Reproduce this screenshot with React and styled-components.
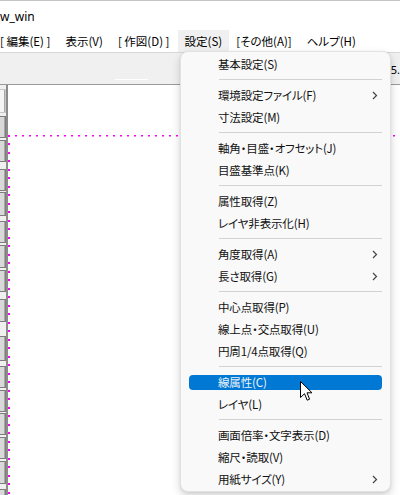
import React from 'react';
import styled, { createGlobalStyle } from 'styled-components';

const Global = createGlobalStyle`
  html, body { margin: 0; padding: 0; background: #fff; }
  #root { width: 400px; height: 495px; }
`;

const Screen = styled.div`
  position: relative;
  width: 400px;
  height: 495px;
  overflow: hidden;
  background: #fff;
  display: flex;
  flex-direction: column;
  font-family: "Noto Sans CJK JP", "Noto Sans", sans-serif;
  font-feature-settings: "palt";
  color: #000;
`;

const TitleBar = styled.div`
  height: 28px;
  border-top: 1px solid #c4c4c4;
  display: flex;
  align-items: center;
  font-family: "Noto Sans", "Liberation Sans", sans-serif;
  font-size: 12px;
  padding-top: 1px;
`;

const MenuBar = styled.div`
  height: 22px;
  display: flex;
  align-items: stretch;
  margin-left: -7px;
  font-size: 11.5px;
`;

const MenuBarItem = styled.div`
  display: flex;
  align-items: center;
  padding: 0 7px;
  white-space: pre;
  background: ${p => (p.$open ? '#f0f0f0' : 'transparent')};
  margin-right: ${p => (p.$gap ?? 1)}px;
`;

const Toolbar = styled.div`
  height: 31px;
  background: #f0f0f0;
  border-top: 1px solid #d8d8d8;
  border-bottom: 1px solid #9a9a9a;
  display: flex;
  align-items: flex-end;
  padding-left: 115px;
`;

const WhiteTick = styled.div`
  width: 33px;
  height: 1px;
  background: #fff;
  margin-bottom: 4px;
`;

const Spacer = styled.div`
  flex: 1;
`;

const ToolLabel = styled.div`
  align-self: center;
  font-family: "Noto Sans", "Liberation Sans", sans-serif;
  font-size: 11px;
  margin-right: 0;
  margin-top: 2px;
`;

const Main = styled.div`
  flex: 1;
  display: flex;
  min-height: 0;
`;

const LeftColumn = styled.div`
  width: 6px;
  background: #f0f0f0;
  display: flex;
  flex-direction: column;
  padding-top: 4px;
`;

const ToolButton = styled.div`
  flex: none;
  height: ${p => p.$h}px;
  margin-top: ${p => p.$gap}px;
  background: ${p => (p.$light ? '#f6f6f6' : '#d9d9d9')};
  border: 1px solid ${p => (p.$light ? '#c8c8c8' : '#7d7d7d')};
  border-left: none;
  box-shadow: inset -1px 0 0 #a8a8a8;
`;

const Canvas = styled.div`
  flex: 1;
  border-left: 2px solid #8c8c8c;
  background: #fff;
  display: flex;
  flex-direction: column;
`;

const Frame = styled.div`
  margin-top: 50px;
  flex: 1;
  background:
    repeating-linear-gradient(to right, #f0f 0 2px, transparent 2px 7px) top left / 100% 1.5px no-repeat,
    repeating-linear-gradient(to bottom, #f0f 0 2px, transparent 2px 8.5px) top left / 2px 100% no-repeat;
`;

const Dropdown = styled.div`
  position: absolute;
  left: 180px;
  top: 51px;
  width: 209px;
  padding: 1px 0;
  background: #f9f9f9;
  border: 1px solid #e2e2e2;
  border-radius: 8px;
  box-shadow: 0 4px 10px rgba(0, 0, 0, 0.16), 0 1px 3px rgba(0, 0, 0, 0.08);
  font-size: 11.5px;
`;

const Item = styled.div`
  height: 22px;
  display: flex;
  align-items: center;
`;

const ItemRow = styled.div`
  flex: 1;
  height: 15px;
  margin: 0 8px;
  padding: 0 4px 0 29px;
  border-radius: 4px;
  display: flex;
  align-items: center;
  justify-content: space-between;
  background: ${p => (p.$active ? '#0078d4' : 'transparent')};
  color: ${p => (p.$active ? '#eef3f9' : '#111')};
  letter-spacing: -0.15px;
  white-space: pre;
`;

const Separator = styled.div`
  height: 9px;
  display: flex;
  align-items: center;
  padding: 0 8px 0 38px;
  &::after {
    content: '';
    flex: 1;
    height: 1px;
    background: #d2d2d2;
  }
`;

const Chevron = () => (
  <svg width="6" height="9" viewBox="0 0 6 9">
    <path d="M1 1 L4.5 4.5 L1 8" fill="none" stroke="#444" strokeWidth="1.2" />
  </svg>
);

const Cursor = styled.svg`
  position: absolute;
  left: 300px;
  top: 381px;
`;

const menuBar = [
  { t: '[ 編集(E) ]' },
  { t: '表示(V)' },
  { t: '[ 作図(D) ]' },
  { t: '設定(S)', open: true, gap: 0 },
  { t: '[その他(A)]' },
  { t: 'ヘルプ(H)' },
];

const menu = [
  { t: '基本設定(S)' },
  'sep',
  { t: '環境設定ファイル(F)', sub: true },
  { t: '寸法設定(M)' },
  'sep',
  { t: '軸角・目盛・オフセット(J)' },
  { t: '目盛基準点(K)' },
  'sep',
  { t: '属性取得(Z)' },
  { t: 'レイヤ非表示化(H)' },
  'sep',
  { t: '角度取得(A)', sub: true },
  { t: '長さ取得(G)', sub: true },
  'sep',
  { t: '中心点取得(P)' },
  { t: '線上点・交点取得(U)' },
  { t: '円周1/4点取得(Q)' },
  'sep',
  { t: '線属性(C)', active: true },
  { t: 'レイヤ(L)' },
  'sep',
  { t: '画面倍率・文字表示(D)' },
  { t: '縮尺・読取(V)' },
  { t: '用紙サイズ(Y)', sub: true },
];

const buttons = [
  { h: 22, gap: 0, light: true },
  { h: 20, gap: 3 },
  { h: 20, gap: 2 },
  { h: 20, gap: 7 },
  { h: 22, gap: 1 },
  { h: 20, gap: 5 },
  { h: 21, gap: 2 },
  { h: 20, gap: 2 },
  { h: 21, gap: 7 },
  { h: 23, gap: 14 },
  { h: 20, gap: 5 },
  { h: 20, gap: 2 },
  { h: 20, gap: 1 },
  { h: 20, gap: 2 },
  { h: 21, gap: 2 },
  { h: 22, gap: 5 },
  { h: 20, gap: 2 },
];

export default function App() {
  return (
    <Screen>
      <Global />
      <TitleBar>w_win</TitleBar>
      <MenuBar>
        {menuBar.map(m => (
          <MenuBarItem key={m.t} $open={m.open} $gap={m.gap}>
            {m.t}
          </MenuBarItem>
        ))}
      </MenuBar>
      <Toolbar>
        <WhiteTick />
        <Spacer />
        <ToolLabel>5.</ToolLabel>
      </Toolbar>
      <Main>
        <LeftColumn>
          {buttons.map((b, i) => (
            <ToolButton key={i} $h={b.h} $gap={b.gap} $light={b.light} />
          ))}
        </LeftColumn>
        <Canvas>
          <Frame />
        </Canvas>
      </Main>
      <Dropdown>
        {menu.map((m, i) =>
          m === 'sep' ? (
            <Separator key={i} />
          ) : (
            <Item key={i}>
              <ItemRow $active={m.active}>
                <span>{m.t}</span>
                {m.sub && <Chevron />}
              </ItemRow>
            </Item>
          )
        )}
      </Dropdown>
      <Cursor width="13" height="21" viewBox="0 0 13 21">
        <path
          d="M0.5 0.5 L0.5 16.5 L4.5 12.7 L7.2 19.2 L9.6 18.2 L7 11.8 L12 11.8 Z"
          fill="#fff"
          stroke="#000"
          strokeWidth="1"
          strokeLinejoin="miter"
        />
      </Cursor>
    </Screen>
  );
}
